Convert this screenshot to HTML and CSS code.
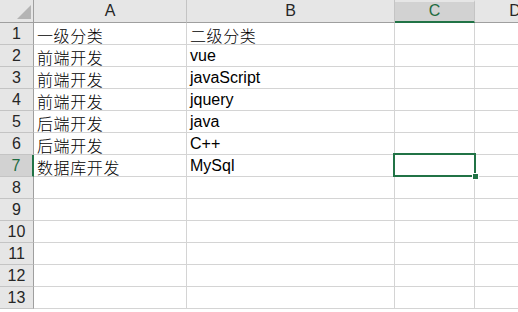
FILE: index.html
```html
<!DOCTYPE html>
<html lang="zh">
<head>
<meta charset="utf-8">
<link rel="stylesheet" href="styles.css">
</head>
<body>
<div class="sheet">
  <div class="corner"><span class="tri"></span></div>
  <div class="colh">A</div>
  <div class="colh">B</div>
  <div class="colh sel">C</div>
  <div class="colh last">D</div>

  <div class="rowh">1</div><div class="cell cjk">一级分类</div><div class="cell cjk">二级分类</div><div class="cell"></div><div class="cell last"></div>
  <div class="rowh">2</div><div class="cell cjk">前端开发</div><div class="cell">vue</div><div class="cell"></div><div class="cell last"></div>
  <div class="rowh">3</div><div class="cell cjk">前端开发</div><div class="cell">javaScript</div><div class="cell"></div><div class="cell last"></div>
  <div class="rowh">4</div><div class="cell cjk">前端开发</div><div class="cell">jquery</div><div class="cell"></div><div class="cell last"></div>
  <div class="rowh">5</div><div class="cell cjk">后端开发</div><div class="cell">java</div><div class="cell"></div><div class="cell last"></div>
  <div class="rowh">6</div><div class="cell cjk">后端开发</div><div class="cell">C++</div><div class="cell"></div><div class="cell last"></div>
  <div class="rowh sel">7</div><div class="cell cjk">数据库开发</div><div class="cell">MySql</div><div class="cell active"></div><div class="cell last"></div>
  <div class="rowh">8</div><div class="cell"></div><div class="cell"></div><div class="cell"></div><div class="cell last"></div>
  <div class="rowh">9</div><div class="cell"></div><div class="cell"></div><div class="cell"></div><div class="cell last"></div>
  <div class="rowh">10</div><div class="cell"></div><div class="cell"></div><div class="cell"></div><div class="cell last"></div>
  <div class="rowh">11</div><div class="cell"></div><div class="cell"></div><div class="cell"></div><div class="cell last"></div>
  <div class="rowh">12</div><div class="cell"></div><div class="cell"></div><div class="cell"></div><div class="cell last"></div>
  <div class="rowh">13</div><div class="cell"></div><div class="cell"></div><div class="cell"></div><div class="cell last"></div>
</div>
</body>
</html>
```

FILE: styles.css
```css
* { box-sizing: border-box; }
html, body { margin: 0; padding: 0; background: #fff; }
body {
  width: 518px;
  height: 312px;
  overflow: hidden;
  font-family: "Liberation Sans", Arial, "Noto Sans CJK SC", sans-serif;
  font-size: 16px;
  color: #000;
}
.sheet {
  display: grid;
  grid-template-columns: 34px 153px 208px 80px 80px;
  grid-template-rows: 23px repeat(13, 22px);
}
.corner {
  background: #e6e6e6;
  border-right: 1px solid #9f9f9f;
  border-bottom: 1px solid #9f9f9f;
  position: relative;
}
.tri {
  position: absolute;
  left: 17px;
  top: 5px;
  width: 0;
  height: 0;
  border-left: 14px solid transparent;
  border-bottom: 14px solid #b4b4b4;
}
.colh {
  background: #e6e6e6;
  border-right: 1px solid #c4c4c4;
  border-bottom: 1px solid #9f9f9f;
  display: flex;
  align-items: flex-end;
  justify-content: center;
  padding-bottom: 2px;
  line-height: 18px;
  color: #262626;
}
.colh.sel {
  background: #d2d2d2;
  border-top: 2px solid #e6e6e6;
  border-bottom: 2px solid #217346;
  padding-bottom: 1px;
  color: #1e6b41;
}
.colh.last { border-right: none; }
.rowh {
  background: #e6e6e6;
  border-right: 1px solid #9f9f9f;
  border-bottom: 1px solid #c4c4c4;
  display: flex;
  align-items: flex-end;
  justify-content: center;
  padding-bottom: 1px;
  line-height: 18px;
  color: #262626;
}
.rowh.sel {
  background: #d2d2d2;
  border-right: 2px solid #217346;
  color: #1e6b41;
}
.cell {
  border-right: 1px solid #d4d4d4;
  border-bottom: 1px solid #d4d4d4;
  display: flex;
  align-items: flex-end;
  padding: 0 0 1px 3px;
  line-height: 18px;
  white-space: nowrap;
}
.cell.last { border-right: none; }
.cjk {
  font-family: "Noto Sans CJK SC", sans-serif;
  font-weight: 300;
  letter-spacing: 0.6px;
  padding-bottom: 0;
}
.active { position: relative; }
.active::before {
  content: "";
  position: absolute;
  left: -2px;
  top: -2px;
  right: -2px;
  bottom: -1px;
  border: 2px solid #217346;
}
.active::after {
  content: "";
  position: absolute;
  right: -4px;
  bottom: -3px;
  width: 5px;
  height: 5px;
  background: #217346;
  outline: 1px solid #fff;
}
```
